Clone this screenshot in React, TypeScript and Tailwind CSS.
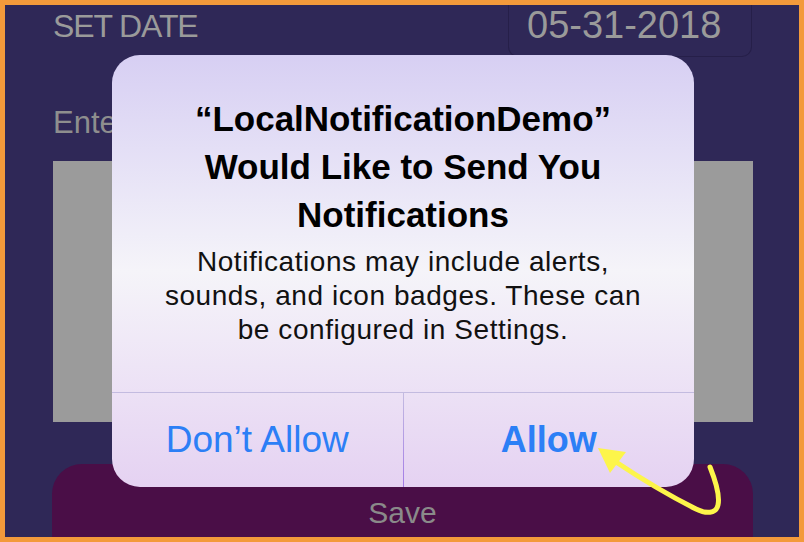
import React from "react";

const font = { fontFamily: '"Liberation Sans", Arial, sans-serif' };

function PermissionAlert() {
  return (
    <div className="absolute left-[107px] top-[50px] flex h-[432px] w-[582px] flex-col overflow-hidden rounded-[28px] bg-gradient-to-b from-[#d7cff3] via-[#f5f4f9] to-[#e5d2f2]">
      <div className="flex h-[337px] flex-col items-center pt-[40px] text-center">
        <div className="text-[35px] font-bold leading-[48px] text-black">
          “LocalNotificationDemo”
          <br />
          Would Like to Send You
          <br />
          Notifications
        </div>
        <div className="mt-[6px] text-[28px] leading-[34px] tracking-[0.02em] text-[#111]">
          Notifications may include alerts,
          <br />
          sounds, and icon badges. These can
          <br />
          be configured in Settings.
        </div>
      </div>
      <div className="flex flex-1 border-t border-[#c3bbe0]">
        <button className="flex flex-1 items-center justify-center text-[37px] text-[#2c7ff6]">
          Don’t Allow
        </button>
        <div className="w-px bg-gradient-to-b from-[#c3bbe0] to-[#a37ae6]" />
        <button className="flex flex-1 items-center justify-center text-[36px] font-bold text-[#2c7ff6]">
          Allow
        </button>
      </div>
    </div>
  );
}

// hand-drawn annotation arrow pointing at "Allow"
function Arrow() {
  return (
    <svg
      aria-hidden="true"
      className="pointer-events-none absolute -left-[5px] -top-[5px]"
      width="804"
      height="542"
      viewBox="0 0 804 542"
    >
      <path
        d="M710 467 C716 482 720 496 718 505 C716 514 706 514 696 509 C672 497 640 478 616 462"
        fill="none"
        stroke="#fdf54a"
        strokeWidth="5"
        strokeLinecap="round"
      />
      <polygon points="598,448 626,452 610,473" fill="#fdf54a" />
    </svg>
  );
}

export default function App() {
  return (
    <div
      style={font}
      className="relative h-[542px] w-[804px] overflow-hidden border-[5px] border-[#f39a3b] bg-[#2f2857]"
    >
      <div className="flex flex-col pl-[48px]">
        <div className="flex h-[52px] items-start justify-between pr-[47px]">
          <div className="mt-[3px] text-[32px] leading-[36px] tracking-[-0.035em] text-[#9a9a9a]">SET DATE</div>
          <div className="h-[52px] w-[244px] rounded-b-[10px] border border-t-0 border-[#261f49] pl-[18px] pt-[2px] text-[38px] leading-[36px] text-[#9a9a9a]">
            05-31-2018
          </div>
        </div>
        <div className="mt-[48px] w-[59px] overflow-hidden whitespace-nowrap text-[31px] leading-[36px] text-[#8e8e8e]">
          Enter message
        </div>
        <div className="mt-[20px] h-[261px] w-[700px] bg-[#9b9b9b]" />
        <div className="mt-[42px] h-[100px] w-[701px] -ml-px rounded-t-[30px] bg-[#4a0e47] pt-[32px] text-center text-[30px] leading-[34px] text-[#8a8a8a]">
          Save
        </div>
      </div>
      <PermissionAlert />
      <Arrow />
    </div>
  );
}
